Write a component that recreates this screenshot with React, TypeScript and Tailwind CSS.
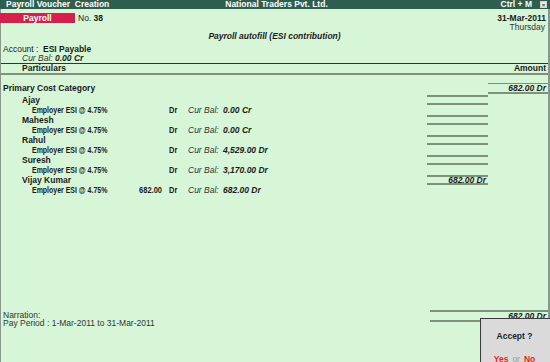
const people = [
  { name: "Ajay", amount: "", bal: "0.00 Cr" },
  { name: "Mahesh", amount: "", bal: "0.00 Cr" },
  { name: "Rahul", amount: "", bal: "4,529.00 Dr" },
  { name: "Suresh", amount: "", bal: "3,170.00 Dr" },
  { name: "Vijay Kumar", amount: "682.00", bal: "682.00 Dr" },
];

function PersonRows({ name, amount, bal }: { name: string; amount: string; bal: string }) {
  return (
    <>
      <div className="flex h-[10px] items-stretch">
        <div className="flex flex-1 items-center pl-[21px] font-bold">{name}</div>
        <div className="flex w-[61px] items-center justify-end border-y-2 border-[#7d917d] pr-[2px] font-bold italic">
          {amount ? `${amount} Dr` : ""}
        </div>
        <div className="w-[60px]" />
      </div>
      <div className="flex h-[10px] items-center">
        <span className="w-[130px] pl-[31px] font-bold">
          <span className="inline-block origin-left scale-x-[0.82] whitespace-nowrap">Employer ESI @ 4.75%</span>
        </span>
        <span className="w-[31px] text-right font-bold">
          <span className="inline-block origin-right scale-x-[0.88]">{amount}</span>
        </span>
        <span className="ml-[7px] w-[19px] font-bold">
          <span className="inline-block origin-left scale-x-[0.88]">Dr</span>
        </span>
        <span className="w-[35px] italic text-[#333]">Cur Bal:</span>
        <span className="font-bold italic">{bal}</span>
      </div>
    </>
  );
}

export default function App() {
  return (
    <div className="relative flex h-[362px] w-[550px] flex-col overflow-hidden bg-[#d7f5d7] font-['Liberation_Sans',Arial,sans-serif] text-[8.5px] leading-none text-[#1b1b1b]">
      {/* title bar */}
      <div className="flex h-[9px] shrink-0 items-center bg-[#2e5e4e] font-bold text-white">
        <div className="flex-1 pl-[6px]">Payroll Voucher&nbsp; Creation</div>
        <div>National Traders Pvt. Ltd.</div>
        <div className="flex flex-1 items-center justify-end gap-[8px] pr-[3px]">
          <span>Ctrl + M</span>
          <span className="flex h-[7px] w-[7px] items-center justify-center border border-[#cfd8cf] bg-[#e8ece8] text-[6px] text-[#444]">
            ×
          </span>
        </div>
      </div>

      <div className="flex flex-1 flex-col border-l border-r-2 border-[#8a978a]">
        {/* voucher type / date */}
        <div className="mt-[4px] flex h-[10px] items-stretch">
          <div className="-ml-px flex w-[75px] items-center justify-center bg-[#d81e4d] font-bold text-white">Payroll</div>
          <div className="ml-[3px] flex items-center">
            No.&nbsp;<span className="font-bold">38</span>
          </div>
          <div className="flex flex-1 items-center justify-end pr-[2px] font-bold">31-Mar-2011</div>
        </div>
        <div className="flex h-[9px] items-center justify-end pr-[3px] text-[#333]">Thursday</div>
        <div className="flex h-[9px] items-center justify-center font-bold italic">
          Payroll autofill (ESI contribution)
        </div>

        <div className="mt-[3px] flex h-[10px] items-center pl-[2px]">
          <span className="w-[40px]">Account :</span>
          <span className="font-bold">ESI Payable</span>
        </div>
        <div className="flex h-[9px] items-center pl-[21px]">
          <span className="w-[33px] italic text-[#333]">Cur Bal:</span>
          <span className="font-bold italic">0.00 Cr</span>
        </div>

        {/* column header */}
        <div className="h-[1px] bg-[#2a3a2a]" />
        <div className="flex h-[9px] items-center pl-[21px] pr-[2px] font-bold">
          <span className="flex-1">Particulars</span>
          <span>Amount</span>
        </div>
        <div className="h-[2px] bg-[#7d917d]" />

        {/* entries */}
        <div className="mt-[8px] flex h-[11px] items-stretch">
          <div className="flex flex-1 items-center pl-[2px] font-bold">Primary Cost Category</div>
          <div className="flex w-[60px] items-center justify-end border-t border-b-2 border-[#7d917d] pr-[2px] font-bold italic">
            682.00 Dr
          </div>
        </div>
        <div className="mt-[1px] flex flex-col">
          {people.map((p) => (
            <PersonRows key={p.name} {...p} />
          ))}
        </div>

        <div className="flex-1" />

        {/* narration */}
        <div className="mb-[34px] flex items-start">
          <div className="flex flex-1 flex-col pl-[2px] pt-[1px]">
            <div className="flex h-[8px] items-center text-[#333]">Narration:</div>
            <div className="flex h-[9px] items-center text-[#333]">Pay Period : 1-Mar-2011 to 31-Mar-2011</div>
          </div>
          <div className="flex h-[12px] w-[118px] items-center justify-end border-y-2 border-[#7d917d] pr-[2px] font-bold italic">
            682.00 Dr
          </div>
        </div>
      </div>

      {/* accept prompt */}
      <div className="absolute left-[480px] top-[318px] flex h-[46px] w-[72px] flex-col items-center border border-[#3a3a3a] bg-[#dadada] pr-[3px]">
        <div className="mt-[13px] font-bold text-[#222]">Accept ?</div>
        <div className="mt-[14px] flex gap-[4px] font-bold">
          <span className="text-[#f01c1c]">Yes</span>
          <span className="font-normal text-[#9a9a9a]">or</span>
          <span className="text-[#f01c1c]">No</span>
        </div>
      </div>
    </div>
  );
}
